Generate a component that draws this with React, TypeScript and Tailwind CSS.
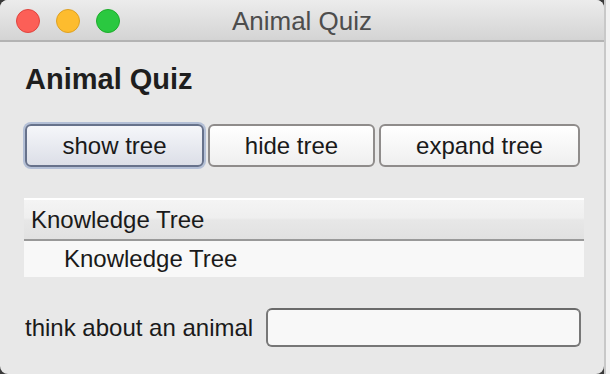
const FONT = { fontFamily: "'Liberation Sans', Arial, sans-serif" };

const BUTTONS: { label: string; width: string; focused?: boolean }[] = [
  { label: "show tree", width: "w-[179px]", focused: true },
  { label: "hide tree", width: "w-[167px]" },
  { label: "expand tree", width: "w-[201px]" },
];

function TrafficLights() {
  return (
    <div className="absolute left-[16px] top-[9px] flex gap-[16px]">
      <span className="block w-[24px] h-[24px] rounded-full bg-[#fc5f57] border border-[#e0443e]" />
      <span className="block w-[24px] h-[24px] rounded-full bg-[#fdbc2e] border border-[#dea123]" />
      <span className="block w-[24px] h-[24px] rounded-full bg-[#2ac840] border border-[#1dad2b]" />
    </div>
  );
}

export default function App() {
  return (
    <div className="w-[610px] h-[374px] flex bg-[#3a3a3a] overflow-hidden" style={FONT}>
      {/* window */}
      <div className="relative w-[604px] h-full flex flex-col bg-[#e8e8e8] rounded-t-[8px] rounded-b-[8px] overflow-hidden">
        {/* title bar */}
        <div className="relative h-[42px] shrink-0 flex items-center justify-center bg-[linear-gradient(#ececec,#d4d4d4)] border-b-2 border-[#b3b3b3]">
          <TrafficLights />
          <span className="text-[26px] leading-none text-[#4d4d4d] pt-[1px]">Animal Quiz</span>
        </div>

        {/* content */}
        <div className="flex flex-col pl-[25px] pr-[20px]">
          <h1 className="mt-[21px] text-[29px] leading-[32px] font-bold text-[#1e1e1e]">Animal Quiz</h1>

          <div className="mt-[29px] flex gap-[4px]">
            {BUTTONS.map(b =>
              b.focused ? (
                <button key={b.label}
                  className={`${b.width} h-[43px] flex items-center justify-center rounded-[6px] border-2 border-[#67728b] bg-[linear-gradient(#f5f6fa,#dcdfe7)] shadow-[0_0_0_2px_#b3bfd6] text-[24px] leading-[28px] text-[#1a1a1a]`}>
                  {b.label}
                </button>
              ) : (
                <button key={b.label}
                  className={`${b.width} h-[43px] flex items-center justify-center rounded-[6px] border-2 border-[#8f8c8b] bg-[linear-gradient(#ffffff,#efefef)] text-[24px] leading-[28px] text-[#1a1a1a]`}>
                  {b.label}
                </button>
              )
            )}
          </div>

          {/* tree */}
          <div className="mt-[31px] -ml-[1px] w-[560px] flex flex-col">
            <div className="h-[43px] flex items-center pl-[7px] border-t-2 border-white border-b-2 border-b-[#999999] bg-[linear-gradient(#f4f4f4_0%,#efefef_45%,#e7e7e7_52%,#e1e1e1_100%)] text-[24px] text-[#1a1a1a]">
              Knowledge Tree
            </div>
            <div className="h-[36px] flex items-center pl-[40px] bg-[#f8f8f8] text-[24px] text-[#1a1a1a]">
              Knowledge Tree
            </div>
          </div>

          <div className="mt-[31px] flex items-center">
            <span className="w-[241px] shrink-0 whitespace-nowrap text-[24px] text-[#1a1a1a]">think about an animal</span>
            <input
              className="w-[315px] h-[39px] shrink-0 rounded-[6px] border-2 border-[#777777] border-t-[#6a6a6a] bg-[#f8f8f8] outline-none px-2 text-[22px]"
              style={FONT}
            />
          </div>
        </div>
      </div>

      {/* desktop strip */}
      <div className="flex-1 h-full bg-[#f2f2f2] border-l-2 border-[#c8c8c8]" />
    </div>
  );
}
